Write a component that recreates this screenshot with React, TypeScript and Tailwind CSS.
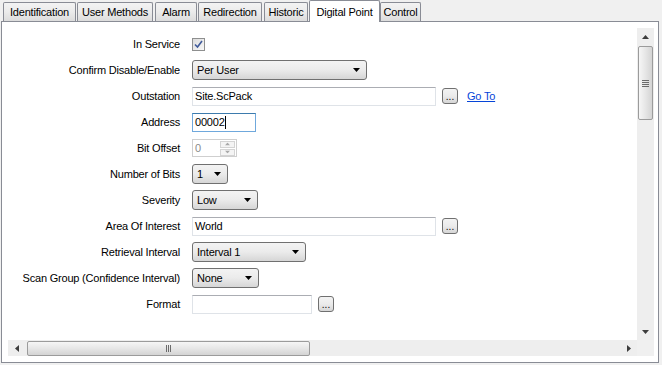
import React from 'react'

const Tri = ({dir, className = ''}: {dir: 'up' | 'down' | 'left' | 'right'; className?: string}) => {
  const pts = {
    down: '0,0 7,0 3.5,4',
    up: '0,4 7,4 3.5,0',
    left: '4,0 4,7 0,3.5',
    right: '0,0 0,7 4,3.5'
  }[dir]
  const vertical = dir === 'up' || dir === 'down'
  return (
    <svg
      width={vertical ? 7 : 4}
      height={vertical ? 4 : 7}
      viewBox={vertical ? '0 0 7 4' : '0 0 4 7'}
      className={className}>
      <polygon points={pts} fill="currentColor" />
    </svg>
  )
}

const Combo = ({text, className}: {text: string; className: string}) => (
  <div
    className={`h-[20px] flex items-center justify-between rounded-[3px] border border-[#707070] bg-linear-to-b from-[#f3f3f3] via-[#ebebeb] to-[#d6d6d6] pl-[4px] pr-[6px] text-black ${className}`}>
    <span>{text}</span>
    <Tri dir="down" className="text-black" />
  </div>
)

const TextBox = ({
  text,
  className,
  focused = false
}: {
  text?: string
  className: string
  focused?: boolean
}) => (
  <div
    className={`h-[19px] flex items-center pl-[2px] bg-white border ${
      focused
        ? 'border-[#6fa8dc] border-t-[#3d7bad]'
        : 'border-[#dfe3e8] border-t-[#abadb3]'
    } ${className}`}>
    <span>{text}</span>
    {focused && <span className="w-px h-[13px] bg-black" />}
  </div>
)

const Dots = ({className = ''}: {className?: string}) => (
  <div
    className={`w-[16px] h-[16px] rounded-[3px] border border-[#707070] bg-linear-to-b from-[#f3f3f3] via-[#ebebeb] to-[#d6d6d6] flex items-end justify-center pb-px text-[10px] leading-none tracking-normal ${className}`}>
    ...
  </div>
)

const tabs = [
  {label: 'Identification', w: 'w-[73px] ml-[3px]'},
  {label: 'User Methods', w: 'w-[76px] ml-[1px]'},
  {label: 'Alarm', w: 'w-[42px] ml-[2px]'},
  {label: 'Redirection', w: 'w-[64px] ml-[1px]'},
  {label: 'Historic', w: 'w-[44px] ml-[2px]'},
  {label: 'Digital Point', w: 'w-[71px] ml-[1px]', active: true},
  {label: 'Control', w: 'w-[41px] ml-0'}
]

const rows: {label: string; control: React.ReactNode}[] = [
  {
    label: 'In Service',
    control: (
      <div className="w-[13px] h-[13px] border border-[#8e8f8f] bg-linear-to-br from-[#dcdcdc] to-[#f8f8f8] flex items-center justify-center">
        <svg width="9" height="9" viewBox="0 0 9 9">
          <path d="M1 4.5 L3.5 7 L8 1" fill="none" stroke="#3f5a9a" strokeWidth="1.6" />
        </svg>
      </div>
    )
  },
  {label: 'Confirm Disable/Enable', control: <Combo text="Per User" className="w-[175px]" />},
  {
    label: 'Outstation',
    control: (
      <>
        <TextBox text="Site.ScPack" className="w-[244px]" />
        <Dots className="ml-[6px]" />
        <a className="ml-[9px] text-[#0645d8] underline cursor-pointer">Go To</a>
      </>
    )
  },
  {label: 'Address', control: <TextBox text="00002" className="w-[64px]" focused />},
  {
    label: 'Bit Offset',
    control: (
      <div className="w-[45px] h-[18px] border border-[#cfcfcf] bg-white flex items-center justify-between pl-[2px] pr-px">
        <span className="text-[#8a8a8a]">0</span>
        <div className="flex flex-col gap-px">
          <div className="w-[15px] h-[7px] border border-[#d4d4d4] bg-[#f4f4f4] flex items-center justify-center">
            <Tri dir="up" className="text-[#a8a8a8] scale-75" />
          </div>
          <div className="w-[15px] h-[7px] border border-[#d4d4d4] bg-[#f4f4f4] flex items-center justify-center">
            <Tri dir="down" className="text-[#a8a8a8] scale-75" />
          </div>
        </div>
      </div>
    )
  },
  {label: 'Number of Bits', control: <Combo text="1" className="w-[36px]" />},
  {label: 'Severity', control: <Combo text="Low" className="w-[66px]" />},
  {
    label: 'Area Of Interest',
    control: (
      <>
        <TextBox text="World" className="w-[244px]" />
        <Dots className="ml-[6px]" />
      </>
    )
  },
  {label: 'Retrieval Interval', control: <Combo text="Interval 1" className="w-[114px]" />},
  {label: 'Scan Group (Confidence Interval)', control: <Combo text="None" className="w-[67px]" />},
  {
    label: 'Format',
    control: (
      <>
        <TextBox className="w-[120px]" />
        <Dots className="ml-[6px]" />
      </>
    )
  }
]

export default function App() {
  return (
    <div className="w-[662px] h-[365px] overflow-hidden bg-[#f0f0f0] font-['Liberation_Sans',Arial,sans-serif] text-[11px] tracking-[-0.2px] text-black">
      {/* tab strip */}
      <div className="h-[21px] flex items-end">
        {tabs.map(t =>
          t.active ? (
            <div
              key={t.label}
              className={`${t.w} h-[22px] -mb-px relative z-10 bg-white border border-b-0 border-[#898c95] rounded-t-[2px] flex items-start justify-center pt-[3px]`}>
              {t.label}
            </div>
          ) : (
            <div
              key={t.label}
              className={`${t.w} h-[19px] bg-linear-to-b from-[#f3f3f3] via-[#ebebeb] to-[#dcdcdc] border border-b-0 border-[#898c95] rounded-t-[2px] flex items-center justify-center pt-px`}>
              {t.label}
            </div>
          )
        )}
      </div>

      {/* panel */}
      <div className="ml-px w-[658px] h-[342px] border border-[#898c95] bg-white pt-[6px] pl-[6px]">
        <div className="w-[646px] h-[328px] grid grid-cols-[629px_17px] grid-rows-[312px_16px]">
          {/* content */}
          <div className="overflow-hidden bg-white">
            <div className="grid grid-cols-[172px_1fr] gap-x-[12px] auto-rows-[26px] pt-[3px]">
              {rows.map(r => (
                <React.Fragment key={r.label}>
                  <div className="flex items-center justify-end whitespace-nowrap">{r.label}</div>
                  <div className="flex items-center">{r.control}</div>
                </React.Fragment>
              ))}
            </div>
          </div>

          {/* vertical scrollbar */}
          <div className="bg-[#eeeeee] flex flex-col items-center">
            <div className="h-[17px] w-full flex items-center justify-center">
              <Tri dir="up" className="text-[#3c3c3c]" />
            </div>
            <div className="mt-px w-[15px] h-[74px] rounded-[2px] border border-[#9b9b9b] bg-linear-to-r from-[#f6f6f6] via-[#e6e6e6] to-[#d4d4d4] flex flex-col items-center justify-center gap-px">
              <div className="w-[7px] h-px bg-[#6b6b6b]" />
              <div className="w-[7px] h-px bg-[#6b6b6b]" />
              <div className="w-[7px] h-px bg-[#6b6b6b]" />
              <div className="w-[7px] h-px bg-[#6b6b6b]" />
            </div>
            <div className="flex-1" />
            <div className="h-[17px] w-full flex items-center justify-center">
              <Tri dir="down" className="text-[#3c3c3c]" />
            </div>
          </div>

          {/* horizontal scrollbar */}
          <div className="bg-[#eeeeee] flex items-center">
            <div className="w-[17px] h-full flex items-center justify-center">
              <Tri dir="left" className="text-[#3c3c3c]" />
            </div>
            <div className="ml-[2px] w-[283px] h-[15px] rounded-[2px] border border-[#9b9b9b] bg-linear-to-b from-[#f6f6f6] via-[#e6e6e6] to-[#d4d4d4] flex items-center justify-center gap-px">
              <div className="w-px h-[7px] bg-[#6b6b6b]" />
              <div className="w-px h-[7px] bg-[#6b6b6b]" />
              <div className="w-px h-[7px] bg-[#6b6b6b]" />
            </div>
            <div className="flex-1" />
            <div className="w-[17px] h-full flex items-center justify-center">
              <Tri dir="right" className="text-[#3c3c3c]" />
            </div>
          </div>

          {/* corner */}
          <div className="bg-[#f0f0f0]" />
        </div>
      </div>
    </div>
  )
}
